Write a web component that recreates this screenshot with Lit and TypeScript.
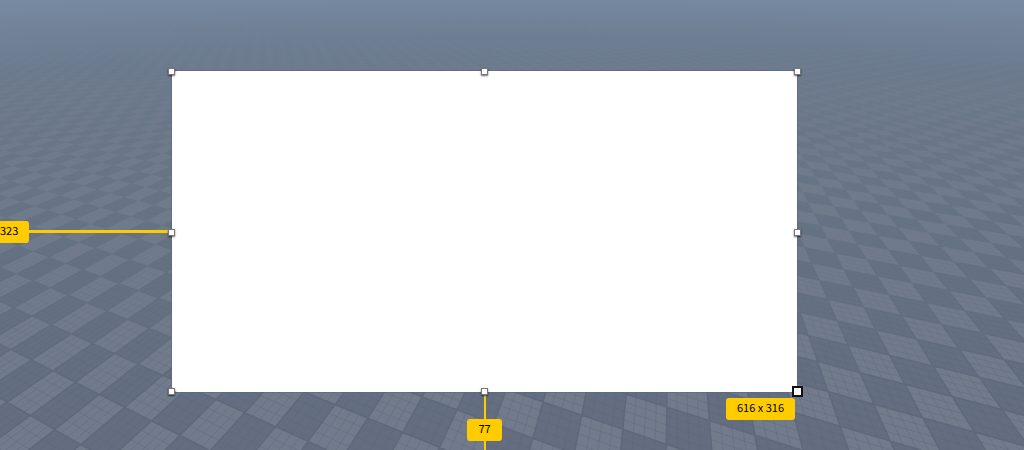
import { LitElement, html, svg, css } from "lit";
import { customElement, property } from "lit/decorators.js";

// Ground plane to view: a 3x3 projection with its last entry fixed at 1.
const GROUND = [21.22578, 47.32003, 75.45125, 1.457159, -3.849935, 382.3032, -0.02712029, 0.0704949];
const VIEW_W = 1024;
const VIEW_H = 450;

const depth = (u: number, v: number) => GROUND[6] * u + GROUND[7] * v + 1;

function project(u: number, v: number): [number, number] {
  const w = depth(u, v);
  return [
    (GROUND[0] * u + GROUND[1] * v + GROUND[2]) / w,
    (GROUND[3] * u + GROUND[4] * v + GROUND[5]) / w,
  ];
}

const at = (u: number, v: number) => project(u, v).map((n) => n.toFixed(1)).join(" ");

function lightTiles(): string {
  let d = "";
  for (let u = -120; u < 250; u++) {
    for (let v = -40; v < 200; v++) {
      if ((u + v) % 2 !== 0) continue;
      const w = depth(u + 0.5, v + 0.5);
      if (w < 0.5 || w > 7) continue;
      const [x, y] = project(u + 0.5, v + 0.5);
      if (x < -80 || x > VIEW_W + 80 || y < 0 || y > VIEW_H + 70) continue;
      d += `M${at(u, v)}L${at(u + 1, v)}L${at(u + 1, v + 1)}L${at(u, v + 1)}Z`;
    }
  }
  return d;
}

// Straight lines on the ground, every `step` tiles, between two depths.
function gridLines(step: number, near: number, far: number): string {
  let d = "";
  for (let u = -50; u <= 70; u += step) {
    const v = (w: number) => (w - 1 - GROUND[6] * u) / GROUND[7];
    d += `M${at(u, v(near))}L${at(u, v(far))}`;
  }
  for (let v = -20; v <= 60; v += step) {
    const u = (w: number) => (w - 1 - GROUND[7] * v) / GROUND[6];
    d += `M${at(u(near), v)}L${at(u(far), v)}`;
  }
  return d;
}

const TILES = lightTiles();
const SEAMS = gridLines(1, 0.75, 2.2);
const FINE = gridLines(0.25, 0.75, 1.7);

@customElement("ground-scene")
export class GroundScene extends LitElement {
  static styles = css`
    :host { display: block; overflow: hidden; }
    svg { display: block; width: 100%; height: 100%; }
    .tiles { fill: #717b8c; }
    .seams { fill: none; stroke: #5c6679; stroke-width: 1.5; opacity: 0.7; }
    .fine { fill: none; stroke: #5b6578; stroke-width: 0.7; opacity: 0.5; }
  `;

  render() {
    return html`<svg viewBox="0 0 ${VIEW_W} ${VIEW_H}" preserveAspectRatio="xMidYMid slice" aria-hidden="true">
      ${svg`
        <defs>
          <linearGradient id="floor" x1="0" y1="0" x2="0" y2="1">
            <stop offset="0" stop-color="#6b7c90" />
            <stop offset="0.3" stop-color="#667486" />
            <stop offset="0.6" stop-color="#647082" />
            <stop offset="1" stop-color="#646d80" />
          </linearGradient>
          <linearGradient id="haze" x1="0" y1="0" x2="0" y2="1">
            <stop offset="0" stop-color="#72859c" stop-opacity="1" />
            <stop offset="0.06" stop-color="#6f8095" stop-opacity="0.85" />
            <stop offset="0.17" stop-color="#6c7c8f" stop-opacity="0.5" />
            <stop offset="0.35" stop-color="#6b798b" stop-opacity="0.3" />
            <stop offset="0.6" stop-color="#6a778a" stop-opacity="0.12" />
            <stop offset="0.85" stop-color="#6a778a" stop-opacity="0" />
          </linearGradient>
          <radialGradient id="glow" cx="0.5" cy="1" r="1.1">
            <stop offset="0.75" stop-color="#8095b0" stop-opacity="0" />
            <stop offset="1" stop-color="#8095b0" stop-opacity="0.3" />
          </radialGradient>
          <linearGradient id="near" x1="0" y1="0" x2="0" y2="1">
            <stop offset="0.45" stop-color="#000" />
            <stop offset="0.9" stop-color="#fff" />
          </linearGradient>
          <mask id="near-only" maskUnits="userSpaceOnUse" x="0" y="0" width="1024" height="450">
            <rect width="1024" height="450" fill="url(#near)" />
          </mask>
        </defs>
        <rect width="1024" height="450" fill="url(#floor)" />
        <path class="tiles" d=${TILES} />
        <g mask="url(#near-only)">
          <path class="fine" d=${FINE} />
          <path class="seams" d=${SEAMS} />
        </g>
        <rect width="1024" height="450" fill="url(#haze)" />
        <rect width="1024" height="220" fill="url(#glow)" />
      `}
    </svg>`;
  }
}

@customElement("selection-frame")
export class SelectionFrame extends LitElement {
  @property() active = "se";

  static styles = css`
    :host {
      display: block;
      position: relative;
      border-radius: 5px;
      background: #fff;
      box-shadow: 0 0 0 1px #5a668599;
    }
    .handle {
      position: absolute;
      box-sizing: border-box;
      width: 7px;
      height: 7px;
      margin: -3px -4px;
      padding: 0;
      border: 1px solid #777;
      border-radius: 0;
      background: #fff;
      box-shadow: 0 1px 2px #0009;
    }
    .n { left: 50%; top: 0; }
    .s { left: 50%; bottom: 0; }
    .w { left: 0; top: 50%; }
    .e { right: 0; top: 50%; }
    .nw { left: 0; top: 0; }
    .ne { right: 0; top: 0; }
    .sw { left: 0; bottom: 0; }
    .se { right: 0; bottom: 0; }
    .active { border-color: #fff; box-shadow: 0 0 0 2px #111; }
  `;

  render() {
    return ["nw", "n", "ne", "w", "e", "sw", "s", "se"].map(
      (side) => html`<button
        class="handle ${side} ${side === this.active ? "active" : ""}"
        aria-label="Resize ${side}"
      ></button>`
    );
  }
}

@customElement("app-root")
export class AppRoot extends LitElement {
  static styles = css`
    :host {
      display: grid;
      grid-template-columns: 172px 1fr 227px;
      grid-template-rows: 71px 1fr 58px;
      height: 100vh;
      overflow: hidden;
      font: 11px/18px "Noto Sans CJK SC", "Noto Sans", sans-serif;
      color: #000;
    }
    ground-scene {
      grid-area: 1 / 1 / -1 / -1;
      min-height: 0;
    }
    selection-frame {
      grid-area: 2 / 2;
      z-index: 1;
    }
    .guide {
      display: flex;
      align-items: center;
    }
    .guide-left { grid-area: 2 / 1; }
    .guide-bottom {
      grid-area: 3 / 2;
      flex-direction: column;
    }
    .rule {
      flex: 1;
      background: #fc0;
    }
    .guide-left .rule { height: 3px; }
    .guide-bottom .rule {
      flex: none;
      width: 2px;
      height: 27px;
    }
    .badge {
      flex: none;
      padding: 0 11px 4px;
      border-radius: 3px;
      background: #fc0;
      white-space: nowrap;
    }
    .guide-left .badge { margin-left: -11px; }
    .size {
      grid-area: 3 / 2;
      place-self: start end;
      margin: 6px 2px;
    }
  `;

  render() {
    return html`
      <ground-scene></ground-scene>
      <div class="guide guide-left">
        <span class="badge">323</span>
        <span class="rule"></span>
      </div>
      <div class="guide guide-bottom">
        <span class="rule"></span>
        <span class="badge">77</span>
        <span class="rule"></span>
      </div>
      <span class="badge size">616 x 316</span>
      <selection-frame active="se"></selection-frame>
    `;
  }
}
